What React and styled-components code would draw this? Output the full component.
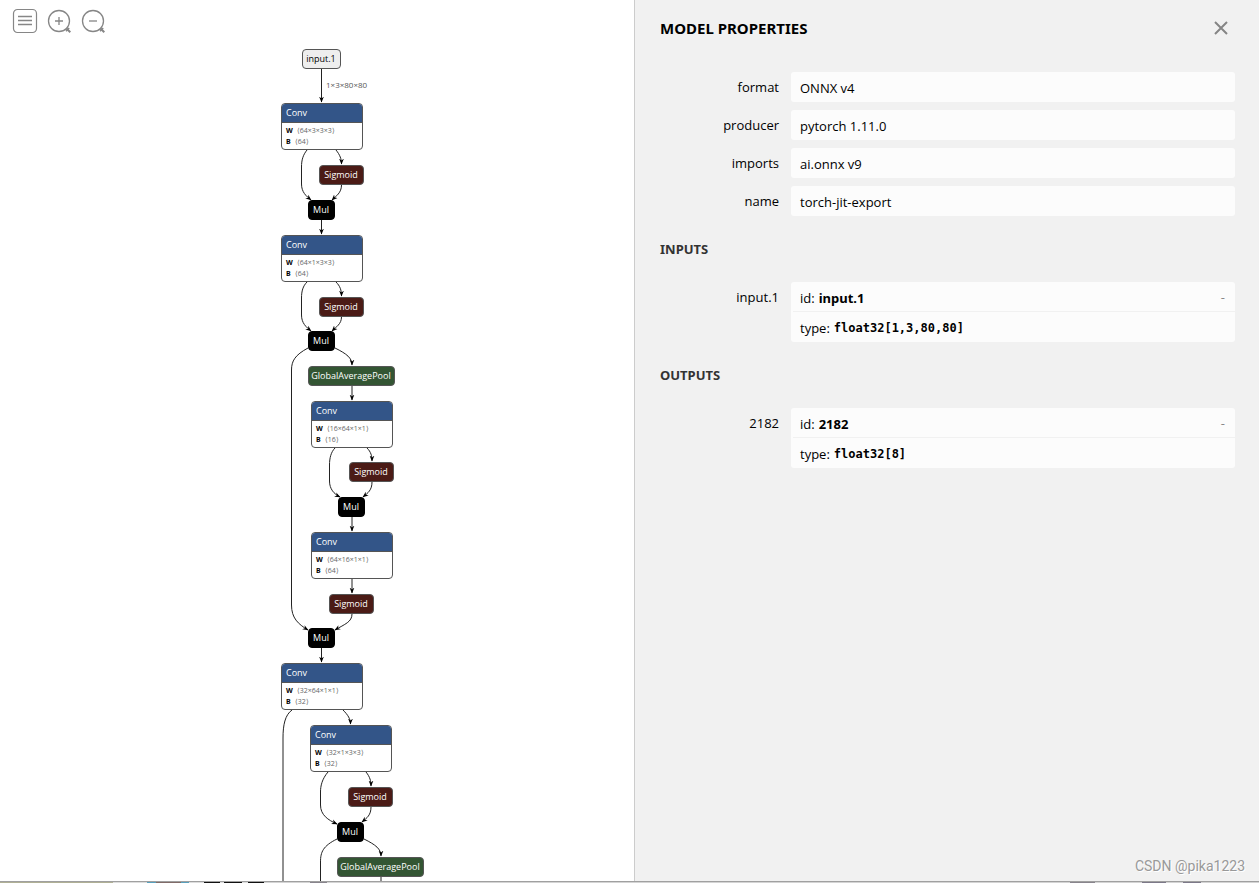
import React from "react";
import styled, { createGlobalStyle } from "styled-components";

const GlobalStyle = createGlobalStyle`
  *, *::before, *::after { box-sizing: border-box; }
  body {
    margin: 0;
    background: #fff;
    color: #000;
    font-family: "Open Sans", "Noto Sans", sans-serif;
    font-size: 13px;
  }
  h1, h2, dl, dd { margin: 0; }
  h1, h2, b { font-family: "Noto Sans", "Open Sans", sans-serif; }
  button { font: inherit; }
`;

const Page = styled.div`
  position: relative;
  height: 100vh;
  display: flex;
  flex-direction: column;
  overflow: hidden;
`;

const Workspace = styled.div`
  flex: 1;
  min-height: 0;
  display: grid;
  grid-template-columns: 634fr 625fr;
`;

const Viewer = styled.main`
  position: relative;
  display: flex;
  justify-content: center;
  overflow: hidden;
`;

const Toolbar = styled.div`
  position: absolute;
  top: 8px;
  left: 12px;
  display: flex;
  gap: 8px;
`;

const ToolButton = styled.button`
  width: 26px;
  height: 26px;
  padding: 0;
  border: 0;
  background: none;
  color: #868686;

  svg { display: block; fill: none; stroke: currentColor; }
`;

const Canvas = styled.div`
  position: relative;
  flex: none;
  width: 260px;
`;

const Edges = styled.svg`
  position: absolute;
  inset: 0;
  display: block;
  fill: none;
  stroke: #222;
`;

const fills = {
  input: "#eee",
  activation: "#4b1b16",
  op: "#000",
  pool: "#335533",
};

const Node = styled.div`
  position: absolute;
  left: ${(p) => p.$x}px;
  top: ${(p) => p.$y}px;
  width: ${(p) => p.$w}px;
  height: 20px;
  display: flex;
  align-items: center;
  justify-content: center;
  padding-right: 1px;
  border: 1px solid ${(p) => (p.$kind === "op" ? "#000" : "#555")};
  border-radius: 4px;
  background: ${(p) => fills[p.$kind]};
  color: ${(p) => (p.$kind === "input" ? "#000" : "#fff")};
  font-size: 9px;
  line-height: 12px;
  white-space: nowrap;
`;

const LayerNode = styled.div`
  position: absolute;
  left: ${(p) => p.$x}px;
  top: ${(p) => p.$y}px;
  width: 82px;
  height: 47px;
  overflow: hidden;
  border: 1px solid #555;
  border-radius: 4px;
  background: #fff;
`;

const LayerName = styled.div`
  height: 19px;
  padding: 0 4px;
  border-bottom: 1px solid #555;
  background: #335588;
  color: #fff;
  font-size: 9px;
  line-height: 18px;
`;

const Weights = styled.div`
  padding: 2px 4px;
`;

const Weight = styled.div`
  display: flex;
  gap: 4px;
  color: #666;
  font-size: 7px;
  line-height: 11px;

  b { color: #000; }
`;

const EdgeLabel = styled.div`
  position: absolute;
  left: 139px;
  top: 79px;
  color: #555;
  font-size: 8px;
  line-height: 11px;
`;

const Sidebar = styled.aside`
  padding: 16px 24px 16px 25px;
  overflow: hidden;
  border-left: 1px solid #ccc;
  background: #f1f1f1;
`;

const SidebarHeader = styled.header`
  display: flex;
  align-items: center;
  justify-content: space-between;
  height: 24px;
  margin-bottom: 32px;
`;

const Title = styled.h1`
  font-size: 15px;
  line-height: 24px;
  font-weight: 700;
`;

const CloseButton = styled.button`
  width: 28px;
  height: 24px;
  padding: 0;
  border: 0;
  background: none;
  color: #858585;

  svg { display: block; margin: 0 auto; fill: none; stroke: currentColor; }
`;

const SectionTitle = styled.h2`
  margin: 24px 0;
  color: #333;
  font-size: 13px;
  line-height: 18px;
  font-weight: 700;
`;

const Properties = styled.dl`
  display: flex;
  flex-direction: column;
  gap: 8px;
`;

const Property = styled.div`
  display: grid;
  grid-template-columns: 119px 1fr;
  gap: 12px;
`;

const Label = styled.dt`
  line-height: 30px;
  text-align: right;
`;

const Value = styled.dd`
  overflow: hidden;
  border-radius: 3px;
  background: #fcfcfc;
`;

const ValueLine = styled.div`
  display: flex;
  align-items: center;
  gap: 4px;
  height: 30px;
  padding: 2px 9px 0;
  line-height: 28px;
`;

const TypeLine = styled(ValueLine)`
  height: 31px;
  margin: -1px 0 0 2px;
  padding: 2px 7px 0;
  border-top: 1px solid #f1f1f1;

  code {
    font-family: "DejaVu Sans Mono", monospace;
    font-size: 12px;
    font-weight: 700;
  }
`;

const Expander = styled.button`
  margin-left: auto;
  padding: 0 1px 2px;
  border: 0;
  background: none;
  color: #888;
  line-height: 20px;
`;

const Watermark = styled.div`
  position: absolute;
  right: 14px;
  bottom: 8px;
  color: #999;
  font-family: Roboto, "Liberation Sans", sans-serif;
  font-size: 14px;
  line-height: 18px;
  text-shadow: 1px 1px 0 #fff;
`;

const Taskbar = styled.footer`
  height: 2px;
  border-top: 1px solid #a0a0a0;
  background: linear-gradient(
    90deg,
    #b0b095 0 9%, #ddd 9% 11.7%, #58a0bd 11.7% 12.4%, #806b68 12.4% 14.4%,
    #58a0bd 14.4% 15%, #ddd 15% 16.2%, #111 16.2% 17.5%, #ddd 17.5% 17.8%,
    #111 17.8% 19.2%, #ddd 19.2% 19.7%, #111 19.7% 21%, #d4d4d4 21% 24.6%,
    #88848c 24.6% 26%, #d4d4d4 26% 85%, #88848c 85% 87%, #d4d4d4 87% 90.7%,
    #7c7888 90.7% 92.6%, #d4d4d4 92.6% 94%, #7c7888 94% 95.4%, #d4d4d4 95.4%
  );
`;

const layers = [
  { x: 94, y: 103, w: "64×3×3×3", b: "64" },
  { x: 94, y: 235, w: "64×1×3×3", b: "64" },
  { x: 124, y: 401, w: "16×64×1×1", b: "16" },
  { x: 124, y: 532, w: "64×16×1×1", b: "64" },
  { x: 94, y: 663, w: "32×64×1×1", b: "32" },
  { x: 123, y: 725, w: "32×1×3×3", b: "32" },
];

const nodes = [
  { kind: "input", label: "input.1", x: 115, y: 49, w: 39 },
  { kind: "activation", label: "Sigmoid", x: 132, y: 165, w: 45 },
  { kind: "op", label: "Mul", x: 121, y: 200, w: 27 },
  { kind: "activation", label: "Sigmoid", x: 132, y: 297, w: 45 },
  { kind: "op", label: "Mul", x: 121, y: 331, w: 27 },
  { kind: "pool", label: "GlobalAveragePool", x: 121, y: 366, w: 87 },
  { kind: "activation", label: "Sigmoid", x: 162, y: 462, w: 45 },
  { kind: "op", label: "Mul", x: 151, y: 497, w: 27 },
  { kind: "activation", label: "Sigmoid", x: 142, y: 594, w: 45 },
  { kind: "op", label: "Mul", x: 121, y: 628, w: 27 },
  { kind: "activation", label: "Sigmoid", x: 161, y: 787, w: 45 },
  { kind: "op", label: "Mul", x: 150, y: 822, w: 27 },
  { kind: "pool", label: "GlobalAveragePool", x: 150, y: 857, w: 87 },
];

const arrows = [
  "M134.5 69V102",
  "M120 150C116 155 114.500 160 114.500 167V184C114.500 192 119 196 124 200",
  "M149 150C153 155 154.500 159 154.500 164",
  "M154.500 185C154.500 193 149 196 145 200",
  "M134.500 220V234",
  "M120 282C116 286 114.500 291 114.500 298V315C114.500 323 119 327 124 331",
  "M149 282C153 286 154.500 290 154.500 296",
  "M154.500 317C154.500 324 149 327 145 331",
  "M121 348C108 355 104.500 361 104.500 370V605C104.500 618 111 624 121 630",
  "M148 348C160 354 165 358 165 365",
  "M165 386V400",
  "M148 448C144 452 142.500 458 142.500 465V481C142.500 489 147 494 153 497",
  "M180 448C184 452 185 456 185 461",
  "M185 482C185 490 181 493 176 497",
  "M165 517V531",
  "M165 579V593",
  "M165 614C165 622 158 624 148 630",
  "M134.500 648V662",
  "M156 710C161 715 163.500 719 163.500 724",
  "M141 772C135 779 133.500 786 133.500 792V805C133.500 815 141 820 150 824",
  "M179 772C183 777 184 781 184 786",
  "M184 807C184 815 180 818 175 822",
  "M177 839C189 845 194 849 194 856",
];

const openEdges = [
  "M105 710C98 715 96 725 96 738V881",
  "M150 839C136 846 133.500 852 133.500 862V881",
  "M194 877V881",
];

const properties = [
  ["format", "ONNX v4"],
  ["producer", "pytorch 1.11.0"],
  ["imports", "ai.onnx v9"],
  ["name", "torch-jit-export"],
];

function Graph() {
  return (
    <Canvas>
      <Edges width="260" height="881" aria-hidden="true">
        <defs>
          <marker id="arrow" viewBox="0 0 10 10" refX="9" refY="5" markerWidth="6" markerHeight="6" orient="auto">
            <path d="M0 1L10 5L0 9L3 5Z" fill="#000" stroke="none" />
          </marker>
        </defs>
        {arrows.map((d) => (
          <path key={d} d={d} markerEnd="url(#arrow)" />
        ))}
        {openEdges.map((d) => (
          <path key={d} d={d} />
        ))}
      </Edges>
      <EdgeLabel>1×3×80×80</EdgeLabel>
      {layers.map((l) => (
        <LayerNode key={l.y} $x={l.x} $y={l.y}>
          <LayerName>Conv</LayerName>
          <Weights>
            <Weight><b>W</b>⟨{l.w}⟩</Weight>
            <Weight><b>B</b>⟨{l.b}⟩</Weight>
          </Weights>
        </LayerNode>
      ))}
      {nodes.map((n) => (
        <Node key={n.y} $kind={n.kind} $x={n.x} $y={n.y} $w={n.w}>
          {n.label}
        </Node>
      ))}
    </Canvas>
  );
}

function Zoom({ label, plus }) {
  return (
    <ToolButton type="button" aria-label={label}>
      <svg width="26" height="26" viewBox="0 0 26 26">
        <circle cx="13" cy="13" r="10.500" strokeWidth="1.300" />
        <path d={plus ? "M9 13H17M13 9V17" : "M9 13H17"} strokeWidth="1.300" />
        <path d="M20.500 20.500L24.300 24.300" strokeWidth="2" />
        <path d="M20 23.200L23.200 20" strokeWidth="1.500" />
      </svg>
    </ToolButton>
  );
}

function Argument({ name, id, type }) {
  return (
    <Property>
      <Label>{name}</Label>
      <Value>
        <ValueLine>
          id: <b>{id}</b>
          <Expander type="button" aria-label={`Collapse ${name}`}>-</Expander>
        </ValueLine>
        <TypeLine>
          type: <code>{type}</code>
        </TypeLine>
      </Value>
    </Property>
  );
}

export default function App() {
  return (
    <Page>
      <GlobalStyle />
      <Workspace>
        <Viewer>
          <Graph />
          <Toolbar>
            <ToolButton type="button" aria-label="Menu">
              <svg width="26" height="26" viewBox="0 0 26 26">
                <rect x="1.500" y="1.500" width="23" height="23" rx="4" strokeWidth="1.200" />
                <path d="M6 8.500H20M6 12.500H20M6 16.500H20" strokeWidth="1.300" />
              </svg>
            </ToolButton>
            <Zoom label="Zoom in" plus />
            <Zoom label="Zoom out" />
          </Toolbar>
        </Viewer>
        <Sidebar>
          <SidebarHeader>
            <Title>MODEL PROPERTIES</Title>
            <CloseButton type="button" aria-label="Close">
              <svg width="14" height="14" viewBox="0 0 14 14">
                <path d="M1 1L13 13M13 1L1 13" strokeWidth="2" />
              </svg>
            </CloseButton>
          </SidebarHeader>
          <Properties>
            {properties.map(([name, value]) => (
              <Property key={name}>
                <Label>{name}</Label>
                <Value>
                  <ValueLine>{value}</ValueLine>
                </Value>
              </Property>
            ))}
          </Properties>
          <SectionTitle>INPUTS</SectionTitle>
          <Properties>
            <Argument name="input.1" id="input.1" type="float32[1,3,80,80]" />
          </Properties>
          <SectionTitle>OUTPUTS</SectionTitle>
          <Properties>
            <Argument name="2182" id="2182" type="float32[8]" />
          </Properties>
        </Sidebar>
      </Workspace>
      <Taskbar />
      <Watermark>CSDN @pika1223</Watermark>
    </Page>
  );
}
